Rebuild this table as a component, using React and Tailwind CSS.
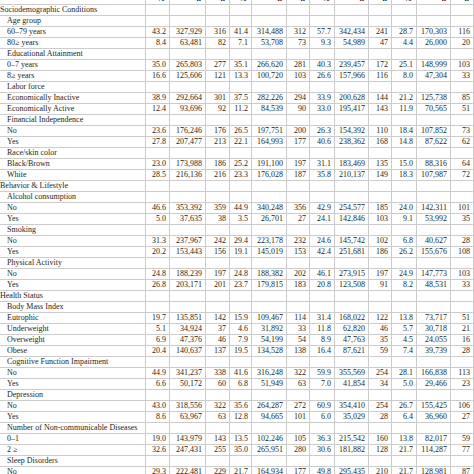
import React from "react";

const rows = [
  { label: "Sociodemographic Conditions", top: true },
  { label: "Age group" },
  { label: "60–79 years", v: ["43.2", "327,929", "316", "41.4", "314,488", "312", "57.7", "342,434", "241", "28.7", "170,303", "116"] },
  { label: "80≥ years", v: ["8.4", "63,481", "82", "7.1", "53,708", "73", "9.3", "54,989", "47", "4.4", "26,000", "20"] },
  { label: "Educational Attainment" },
  { label: "0–7 years", v: ["35.0", "265,803", "277", "35.1", "266,620", "281", "40.3", "239,457", "172", "25.1", "148,999", "103"] },
  { label: "8≥ years", v: ["16.6", "125,606", "121", "13.3", "100,720", "103", "26.6", "157,966", "116", "8.0", "47,304", "33"] },
  { label: "Labor force" },
  { label: "Economically Inactive", v: ["38.9", "292,664", "301", "37.5", "282,226", "294", "33.9", "200,628", "144", "21.2", "125,738", "85"] },
  { label: "Economically Active", v: ["12.4", "93,696", "92", "11.2", "84,539", "90", "33.0", "195,417", "143", "11.9", "70,565", "51"] },
  { label: "Financial Independence" },
  { label: "No", v: ["23.6", "176,246", "176", "26.5", "197,751", "200", "26.3", "154,392", "110", "18.4", "107,852", "73"] },
  { label: "Yes", v: ["27.8", "207,477", "213", "22.1", "164,993", "177", "40.6", "238,362", "168", "14.8", "87,622", "62"] },
  { label: "Race/skin color" },
  { label: "Black/Brown", v: ["23.0", "173,988", "186", "25.2", "191,100", "197", "31.1", "183,469", "135", "15.0", "88,316", "64"] },
  { label: "White", v: ["28.5", "216,136", "216", "23.3", "176,028", "187", "35.8", "210,137", "149", "18.3", "107,987", "72"] },
  { label: "Behavior & Lifestyle", top: true },
  { label: "Alcohol consumption" },
  { label: "No", v: ["46.6", "353,392", "359", "44.9", "340,248", "356", "42.9", "254,577", "185", "24.0", "142,311", "101"] },
  { label: "Yes", v: ["5.0", "37,635", "38", "3.5", "26,701", "27", "24.1", "142,846", "103", "9.1", "53,992", "35"] },
  { label: "Smoking" },
  { label: "No", v: ["31.3", "237,967", "242", "29.4", "223,178", "232", "24.6", "145,742", "102", "6.8", "40,627", "28"] },
  { label: "Yes", v: ["20.2", "153,443", "156", "19.1", "145,019", "153", "42.4", "251,681", "186", "26.2", "155,676", "108"] },
  { label: "Physical Activity" },
  { label: "No", v: ["24.8", "188,239", "197", "24.8", "188,382", "202", "46.1", "273,915", "197", "24.9", "147,773", "103"] },
  { label: "Yes", v: ["26.8", "203,171", "201", "23.7", "179,815", "183", "20.8", "123,508", "91", "8.2", "48,531", "33"] },
  { label: "Health Status", top: true },
  { label: "Body Mass Index" },
  { label: "Eutrophic", v: ["19.7", "135,851", "142", "15.9", "109,467", "114", "31.4", "168,022", "122", "13.8", "73,717", "51"] },
  { label: "Underweight", v: ["5.1", "34,924", "37", "4.6", "31,892", "33", "11.8", "62,820", "46", "5.7", "30,718", "21"] },
  { label: "Overweight", v: ["6.9", "47,376", "46", "7.9", "54,199", "54", "8.9", "47,763", "35", "4.5", "24,055", "16"] },
  { label: "Obese", v: ["20.4", "140,637", "137", "19.5", "134,528", "138", "16.4", "87,621", "59", "7.4", "39,739", "28"] },
  { label: "Cognitive Function Impairment" },
  { label: "No", v: ["44.9", "341,237", "338", "41.6", "316,248", "322", "59.9", "355,569", "254", "28.1", "166,838", "113"] },
  { label: "Yes", v: ["6.6", "50,172", "60", "6.8", "51,949", "63", "7.0", "41,854", "34", "5.0", "29,466", "23"] },
  { label: "Depression" },
  { label: "No", v: ["43.0", "318,556", "322", "35.6", "264,287", "272", "60.9", "354,410", "254", "26.7", "155,425", "106"] },
  { label: "Yes", v: ["8.6", "63,967", "63", "12.8", "94,665", "101", "6.0", "35,029", "28", "6.4", "36,960", "27"] },
  { label: "Number of Non-communicable Diseases" },
  { label: "0–1", v: ["19.0", "143,979", "143", "13.5", "102,246", "105", "36.3", "215,542", "160", "13.8", "82,017", "59"] },
  { label: "2 ≥", v: ["32.6", "247,431", "255", "35.0", "265,951", "280", "30.6", "181,882", "128", "21.7", "114,287", "77"] },
  { label: "Sleep Disorders" },
  { label: "No", v: ["29.3", "222,481", "229", "21.7", "164,934", "177", "49.8", "295,435", "210", "21.7", "128,981", "87"] },
];

const header = ["%", "n", "n", "%", "n", "n", "%", "n", "n", "%", "n", "n"];
const empty = Array(12).fill("");

// every cell draws its own bottom/right rule, like the grid lines of the table
const cell = "h-[11px] border-b border-r border-[#cccccc] leading-[10px] whitespace-nowrap overflow-hidden";

const App = () => {
  return (
    <div className="w-[474px] h-[474px] overflow-hidden bg-white text-[#231f20]" style={{ fontFamily: '"Liberation Serif", "DejaVu Serif", serif' }}>
      <div className="-mt-[6px] grid grid-cols-[146px_24px_36px_24px_22px_35px_23px_25px_34px_23px_25px_34px_23px] text-[8px]">
        <div className={cell}></div>
        {header.map((h, i) => (
          <div key={"h" + i} className={cell + " text-right pr-1 font-bold"}>{h}</div>
        ))}
        {rows.map((r, ri) => (
          <React.Fragment key={ri}>
            <div className={cell + (r.top ? " pl-0" : " pl-[7px]")}>{r.label}</div>
            {(r.v || empty).map((x, i) => (
              <div key={i} className={cell + " text-right pr-[3px]"}>{x}</div>
            ))}
          </React.Fragment>
        ))}
      </div>
    </div>
  );
};

export default App;
